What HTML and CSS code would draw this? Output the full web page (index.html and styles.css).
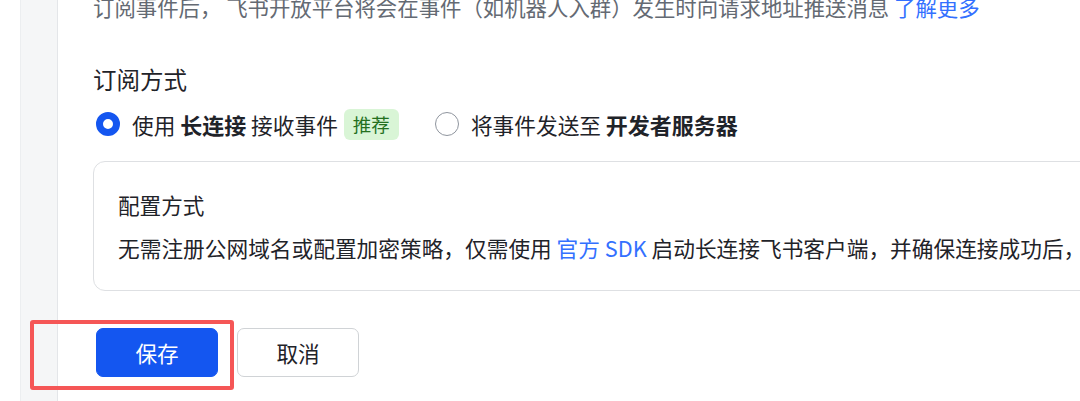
FILE: index.html
```html
<!DOCTYPE html>
<html lang="zh-CN">
<head>
<meta charset="utf-8">
<title>订阅方式</title>
<link rel="stylesheet" href="styles.css">
</head>
<body>
<div class="page">
  <div class="gutter"></div>
  <div class="rail"></div>
  <main class="main">
    <p class="desc">订阅事件后， 飞书开放平台将会在事件（如机器人入群）发生时向请求地址推送消息 <a class="link">了解更多</a></p>
    <h2 class="title">订阅方式</h2>
    <div class="radios">
      <label class="radio">
        <span class="dot checked"></span>
        <span class="radio-text">使用 <b>长连接</b> 接收事件</span>
        <span class="tag">推荐</span>
      </label>
      <label class="radio">
        <span class="dot"></span>
        <span class="radio-text">将事件发送至 <b>开发者服务器</b></span>
      </label>
    </div>
    <div class="card">
      <div class="card-title">配置方式</div>
      <div class="card-text">无需注册公网域名或配置加密策略，仅需使用 <a class="link">官方 SDK</a> 启动长连接飞书客户端，并确保连接成功后，即可在此保存配置。</div>
    </div>
    <div class="actions">
      <button class="btn primary">保存</button>
      <button class="btn">取消</button>
      <div class="highlight"></div>
    </div>
  </main>
</div>
</body>
</html>
```

FILE: styles.css
```css
html, body {
  margin: 0;
  padding: 0;
  background: #ffffff;
  overflow: hidden;
}
body {
  width: 1080px;
  height: 401px;
  font-family: "Noto Sans CJK SC", "Noto Sans", sans-serif;
  color: #1f2329;
}
.page {
  display: flex;
  width: 1300px;
  height: 401px;
}
.gutter {
  width: 20px;
  flex: none;
}
.rail {
  width: 36px;
  flex: none;
  background: #f5f6f7;
  border-left: 1px solid #eceef0;
  border-right: 1px solid #e4e6e9;
}
.main {
  flex: 1;
  padding-left: 35px;
  position: relative;
}
.desc {
  margin: -9px 0 0 0;
  font-size: 21.4px;
  line-height: 32px;
  color: #646a73;
  white-space: nowrap;
}
.link {
  color: #3370ff;
}
.title {
  margin: 38px 0 0 0;
  font-size: 23.5px;
  line-height: 36px;
  font-weight: 400;
  color: #1f2329;
}
.radios {
  display: flex;
  align-items: center;
  gap: 33px;
  margin-top: 9px;
  height: 36px;
}
.radio {
  display: flex;
  align-items: center;
}
.dot {
  width: 24px;
  height: 24px;
  box-sizing: border-box;
  border-radius: 50%;
  border: 1.5px solid #8f959e;
  margin-left: 3px;
  margin-right: 12px;
  background: #fff;
}
.dot.checked {
  border: 7.5px solid #1456f0;
  background: #fff;
}
.radio-text {
  font-size: 21.7px;
  line-height: 32px;
  white-space: nowrap;
}
.radio-text b {
  font-weight: 700;
  font-size: 22px;
}
.tag {
  margin-left: 6px;
  height: 31px;
  padding: 0 9px;
  border-radius: 6px;
  background: #d9f5d6;
  color: #24701f;
  font-size: 18.5px;
  line-height: 31px;
}
.card {
  margin-top: 19px;
  width: 1100px;
  border: 1px solid #dee0e3;
  border-radius: 12px;
  padding: 27px 24px 26px 24px;
}
.card-title {
  font-size: 21.6px;
  line-height: 32px;
}
.card-text {
  margin-top: 11px;
  font-size: 21.7px;
  line-height: 32px;
  white-space: nowrap;
}
.actions {
  margin-top: 37px;
  margin-left: 3px;
  display: flex;
  gap: 19px;
  position: relative;
}
.btn {
  width: 122px;
  height: 49px;
  box-sizing: border-box;
  border: 1px solid #d0d3d6;
  border-radius: 7px;
  background: #fff;
  color: #1f2329;
  font-family: "Noto Sans CJK SC", "Noto Sans", sans-serif;
  font-size: 21.6px;
  padding: 0;
}
.btn.primary {
  background: #1456f0;
  border-color: #1456f0;
  color: #fff;
}
.highlight {
  position: absolute;
  left: -66px;
  top: -8px;
  width: 204px;
  height: 70px;
  box-sizing: border-box;
  border: 4px solid #f55656;
  border-radius: 3px;
  pointer-events: none;
}
```
